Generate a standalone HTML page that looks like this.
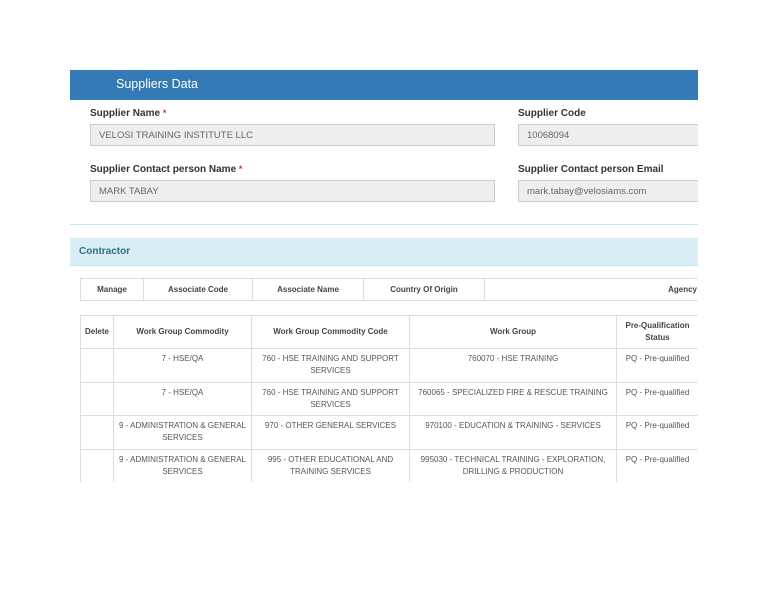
<!DOCTYPE html>
<html><head><style>
body{margin:0;width:768px;height:594px;background:#fff;font-family:"Liberation Sans",Arial,sans-serif;position:relative;overflow:hidden;color:#555}
.abs{position:absolute}
.hdr{left:70px;top:70px;width:628px;height:30px;background:#337ab7;color:#fff;font-size:12.5px;line-height:28px}
.lbl{font-size:10px;font-weight:bold;color:#333}
.lbl i{color:#c33;font-style:normal;font-size:9px;vertical-align:top}
.inp{background:#eee;border:1px solid #ccc;height:22px;box-sizing:border-box;font-size:9.5px;line-height:21px;padding-left:8px;color:#666}
table{border-collapse:collapse;font-size:8px;color:#555;table-layout:fixed}
td,th{border:1px solid #ddd;text-align:center;vertical-align:top;padding:4px 3px;line-height:12px}
th{font-weight:bold;color:#444;vertical-align:middle}
</style></head><body>
<div class="abs hdr"><span style="margin-left:46px">Suppliers Data</span></div>
<div class="abs lbl" style="left:90px;top:108px">Supplier Name <i>*</i></div>
<div class="abs inp" style="left:90px;top:124px;width:405px">VELOSI TRAINING INSTITUTE LLC</div>
<div class="abs lbl" style="left:518px;top:108px">Supplier Code</div>
<div class="abs inp" style="left:518px;top:124px;width:180px;border-right:none">10068094</div>
<div class="abs lbl" style="left:90px;top:164px">Supplier Contact person Name <i>*</i></div>
<div class="abs inp" style="left:90px;top:180px;width:405px">MARK TABAY</div>
<div class="abs lbl" style="left:518px;top:164px">Supplier Contact person Email</div>
<div class="abs inp" style="left:518px;top:180px;width:180px;border-right:none">mark.tabay@velosiams.com</div>
<div class="abs" style="left:70px;top:224px;width:628px;height:1px;background:#bce8f1"></div>
<div class="abs" style="left:70px;top:238px;width:628px;height:28px;background:#d9edf7;border-bottom:1px solid #bce8f1;box-sizing:border-box;color:#31708f;font-size:10px;font-weight:bold;line-height:28px;padding-left:9px">Contractor</div>
<table class="abs" style="left:80px;top:278px;width:640px">
<tr style="height:22px"><th style="width:56px">Manage</th><th style="width:102px">Associate Code</th><th style="width:104px">Associate Name</th><th style="width:114px">Country Of Origin</th><th style="text-align:right;padding-right:22px">Agency</th></tr></table>
<div class="abs" style="left:698px;top:270px;width:70px;height:220px;background:#fff"></div>
<table class="abs" style="left:80px;top:315px;width:619px">
<tr style="height:33px"><th style="width:26px">Delete</th><th style="width:131px">Work Group Commodity</th><th style="width:151px">Work Group Commodity Code</th><th style="width:200px">Work Group</th><th>Pre-Qualification Status</th></tr>
<tr style="height:34px"><td></td><td>7 - HSE/QA</td><td>760 - HSE TRAINING AND SUPPORT SERVICES</td><td>760070 - HSE TRAINING</td><td>PQ - Pre-qualified</td></tr>
<tr style="height:33px"><td></td><td>7 - HSE/QA</td><td>760 - HSE TRAINING AND SUPPORT SERVICES</td><td>760065 - SPECIALIZED FIRE &amp; RESCUE TRAINING</td><td>PQ - Pre-qualified</td></tr>
<tr style="height:34px"><td></td><td>9 - ADMINISTRATION &amp; GENERAL SERVICES</td><td>970 - OTHER GENERAL SERVICES</td><td>970100 - EDUCATION &amp; TRAINING - SERVICES</td><td>PQ - Pre-qualified</td></tr>
<tr style="height:33px"><td style="border-bottom:none"></td><td style="border-bottom:none">9 - ADMINISTRATION &amp; GENERAL SERVICES</td><td style="border-bottom:none">995 - OTHER EDUCATIONAL AND TRAINING SERVICES</td><td style="border-bottom:none">995030 - TECHNICAL TRAINING - EXPLORATION, DRILLING &amp; PRODUCTION</td><td style="border-bottom:none">PQ - Pre-qualified</td></tr>
</table>
<div class="abs" style="left:698px;top:305px;width:70px;height:200px;background:#fff"></div>
<div class="abs" style="left:60px;top:482px;width:700px;height:100px;background:#fff"></div>
</body></html>
